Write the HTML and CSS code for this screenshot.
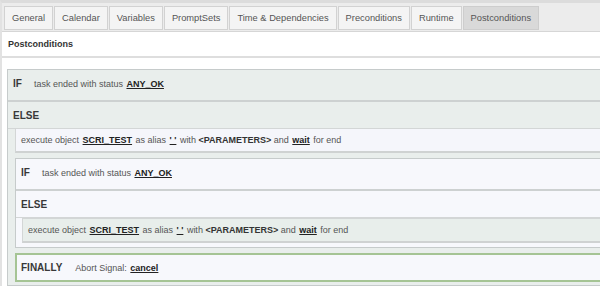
FILE: index.html
```html
<!DOCTYPE html>
<html>
<head>
<meta charset="utf-8">
<link rel="stylesheet" href="styles.css">
</head>
<body>
<div class="page">
  <div class="tabbar">
    <div class="tab">General</div>
    <div class="tab">Calendar</div>
    <div class="tab">Variables</div>
    <div class="tab">PromptSets</div>
    <div class="tab">Time &amp; Dependencies</div>
    <div class="tab">Preconditions</div>
    <div class="tab">Runtime</div>
    <div class="tab active">Postconditions</div>
  </div>
  <div class="heading">Postconditions</div>
  <div class="content">
    <div class="block lvl1">
      <div class="row cond"><span class="kw">IF</span><span class="txt">task ended with status <b class="val">ANY_OK</b></span></div>
      <div class="row else"><span class="kw">ELSE</span></div>
      <div class="body body1">
        <div class="exec exec1">execute object <b class="val">SCRI_TEST</b> as alias <b class="val">' '</b> with <b class="param">&lt;PARAMETERS&gt;</b> and <b class="val">wait</b> for end</div>
        <div class="block lvl2">
          <div class="row cond"><span class="kw">IF</span><span class="txt">task ended with status <b class="val">ANY_OK</b></span></div>
          <div class="row else"><span class="kw">ELSE</span></div>
          <div class="body body2">
            <div class="exec exec2">execute object <b class="val">SCRI_TEST</b> as alias <b class="val">' '</b> with <b class="param">&lt;PARAMETERS&gt;</b> and <b class="val">wait</b> for end</div>
          </div>
        </div>
        <div class="finally"><span class="kw">FINALLY</span><span class="txt">Abort Signal: <b class="val">cancel</b></span></div>
      </div>
    </div>
  </div>
</div>
</body>
</html>
```

FILE: styles.css
```css
html, body {
  margin: 0;
  padding: 0;
  overflow: hidden;
  background: #ffffff;
}

.page {
  border-top: 3px solid #dcdcdc;
  border-left: 2px solid #e2e2e2;
  font-family: "Liberation Sans", Arial, sans-serif;
  color: #444;
}

.tabbar {
  display: flex;
  gap: 1px;
  padding: 3px 0 1px 2px;
  background: #ececec;
  border-bottom: 1px solid #d6d6d6;
}

.tab {
  height: 22px;
  line-height: 22px;
  padding: 0 7px;
  border: 1px solid #d2d2d2;
  background: #f4f4f4;
  font-size: 9.3px;
  color: #555;
  white-space: nowrap;
}

.tab.active {
  background: #d9d9d9;
  border-color: #cdcdcd;
}

.heading {
  height: 24px;
  line-height: 24px;
  padding-left: 6px;
  font-size: 9px;
  font-weight: bold;
  color: #333;
  border-bottom: 2px solid #dedede;
}

.content {
  padding: 11px 0 0 5px;
}

.block {
  border: 1px solid #c6cbcb;
  border-right: 0;
}

.lvl1 {
  background: #e9eeec;
}

.lvl2 {
  background: #f7f8fc;
}

.row {
  display: flex;
  align-items: center;
  box-sizing: border-box;
}

.cond {
  height: 32px;
  padding-bottom: 3px;
  border-bottom: 2px solid #cdd1d1;
}

.else {
  height: 27px;
  border-bottom: 1px solid #d3d6d6;
}

.lvl1 > .row,
.lvl2 > .row {
  padding-left: 5px;
}

.kw {
  font-size: 10px;
  font-weight: bold;
  color: #383838;
}

.cond .kw {
  margin-right: 12px;
}

.txt {
  font-size: 9px;
  color: #555;
}

.val {
  color: #222;
  text-decoration: underline;
  text-decoration-thickness: 1px;
  text-underline-offset: 1px;
  padding: 0 1px;
}

.param {
  color: #333;
}

.body {
  display: flex;
  flex-direction: column;
  gap: 5px;
}

.body1 {
  padding: 0 0 3px 7px;
}

.body2 {
  padding: 0 0 4px 6px;
}

.exec {
  height: 22px;
  line-height: 22px;
  padding-left: 5px;
  font-size: 9px;
  color: #555;
  border-left: 1px solid #d3d6d6;
  border-bottom: 2px solid #cfd2d2;
  white-space: nowrap;
  overflow: hidden;
}

.exec1 {
  background: #f5f6fb;
}

.exec2 {
  background: #e8eeeb;
  border-top: 1px solid #d3d6d6;
}

.finally {
  display: flex;
  align-items: center;
  height: 25px;
  padding-left: 4px;
  border: 2px solid #a5c494;
  border-right: 0;
  background: #f7f8fc;
}

.finally .kw {
  margin-right: 13px;
}
```
